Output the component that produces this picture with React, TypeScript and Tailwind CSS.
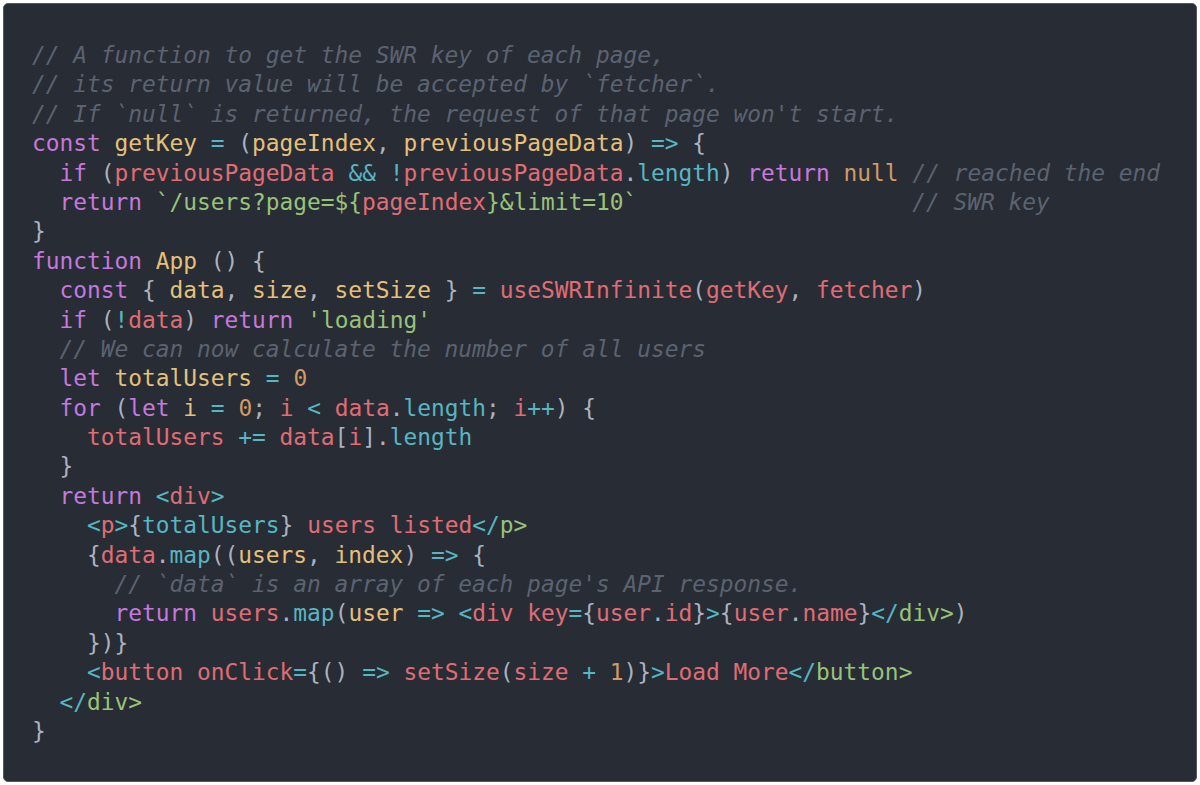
type Tok = [string, string];

const P = "text-[#c678dd]";
const Y = "text-[#e5c07b]";
const R = "text-[#e06c75]";
const C = "text-[#56b6c2]";
const G = "text-[#98c379]";
const O = "text-[#d19a66]";
const F = "text-[#abb2bf]";
const K = "text-[#5c6370] italic";

const lines: Tok[][] = [
  [[K, "// A function to get the SWR key of each page,"]],
  [[K, "// its return value will be accepted by `fetcher`."]],
  [[K, "// If `null` is returned, the request of that page won't start."]],
  [
    [P, "const"], [F, " "], [Y, "getKey"], [F, " "], [C, "="], [F, " ("], [Y, "pageIndex"], [F, ", "],
    [Y, "previousPageData"], [F, ") "], [C, "=>"], [F, " {"],
  ],
  [
    [F, "  "], [P, "if"], [F, " ("], [R, "previousPageData"], [F, " "], [C, "&&"], [F, " "], [C, "!"],
    [R, "previousPageData"], [F, "."], [C, "length"], [F, ") "], [P, "return"], [F, " "], [O, "null"],
    [F, " "], [K, "// reached the end"],
  ],
  [
    [F, "  "], [P, "return"], [F, " "], [G, "`/users?page=${"], [R, "pageIndex"], [G, "}&limit=10`"],
    [F, "                    "], [K, "// SWR key"],
  ],
  [[F, "}"]],
  [[P, "function"], [F, " "], [Y, "App"], [F, " () {"]],
  [
    [F, "  "], [P, "const"], [F, " { "], [Y, "data"], [F, ", "], [Y, "size"], [F, ", "], [Y, "setSize"],
    [F, " } "], [C, "="], [F, " "], [R, "useSWRInfinite"], [F, "("], [R, "getKey"], [F, ", "], [R, "fetcher"], [F, ")"],
  ],
  [[F, "  "], [P, "if"], [F, " ("], [C, "!"], [R, "data"], [F, ") "], [P, "return"], [F, " "], [G, "'loading'"]],
  [[F, "  "], [K, "// We can now calculate the number of all users"]],
  [[F, "  "], [P, "let"], [F, " "], [Y, "totalUsers"], [F, " "], [C, "="], [F, " "], [O, "0"]],
  [
    [F, "  "], [P, "for"], [F, " ("], [P, "let"], [F, " "], [Y, "i"], [F, " "], [C, "="], [F, " "], [O, "0"],
    [F, "; "], [R, "i"], [F, " "], [C, "<"], [F, " "], [R, "data"], [F, "."], [C, "length"], [F, "; "],
    [R, "i"], [C, "++"], [F, ") {"],
  ],
  [[F, "    "], [R, "totalUsers"], [F, " "], [C, "+="], [F, " "], [R, "data"], [F, "["], [R, "i"], [F, "]."], [C, "length"]],
  [[F, "  }"]],
  [[F, "  "], [P, "return"], [F, " "], [C, "<"], [R, "div"], [C, ">"]],
  [
    [F, "    "], [C, "<"], [R, "p"], [C, ">"], [F, "{"], [C, "totalUsers"], [F, "}"], [R, " users listed"],
    [C, "</"], [G, "p>"],
  ],
  [
    [F, "    {"], [R, "data"], [F, "."], [C, "map"], [F, "(("], [Y, "users"], [F, ", "], [Y, "index"], [F, ") "],
    [C, "=>"], [F, " {"],
  ],
  [[F, "      "], [K, "// `data` is an array of each page's API response."]],
  [
    [F, "      "], [P, "return"], [F, " "], [R, "users"], [F, "."], [C, "map"], [F, "("], [Y, "user"], [F, " "],
    [C, "=>"], [F, " "], [C, "<"], [R, "div"], [R, " key"], [C, "="], [F, "{"], [R, "user"], [F, "."], [R, "id"],
    [F, "}"], [C, ">"], [F, "{"], [R, "user"], [F, "."], [R, "name"], [F, "}"], [C, "</"], [G, "div>"], [F, ")"],
  ],
  [[F, "    })}"]],
  [
    [F, "    "], [C, "<"], [R, "button"], [R, " onClick"], [C, "="], [F, "{() "], [C, "=>"], [F, " "], [R, "setSize"],
    [F, "("], [R, "size"], [F, " "], [C, "+"], [F, " "], [O, "1"], [F, ")}"], [C, ">"], [R, "Load More"],
    [C, "</"], [G, "button>"],
  ],
  [[F, "  "], [C, "</"], [G, "div>"]],
  [[F, "}"]],
];

export default function App() {
  return (
    <div className="h-[785px] w-[1200px] bg-white p-[3px]">
      <div className="h-full rounded-[5px] border border-[#55595f] bg-[#282c34] pl-[28px] pt-[37px]">
        <pre className="font-['DejaVu_Sans_Mono',monospace] text-[22.85px] leading-[29.4px] whitespace-pre">
          {lines.map((line, i) => (
            <div key={i} className="h-[29.4px]">
              {line.map(([cls, text], j) => (
                <span key={j} className={cls}>
                  {text}
                </span>
              ))}
            </div>
          ))}
        </pre>
      </div>
    </div>
  );
}
